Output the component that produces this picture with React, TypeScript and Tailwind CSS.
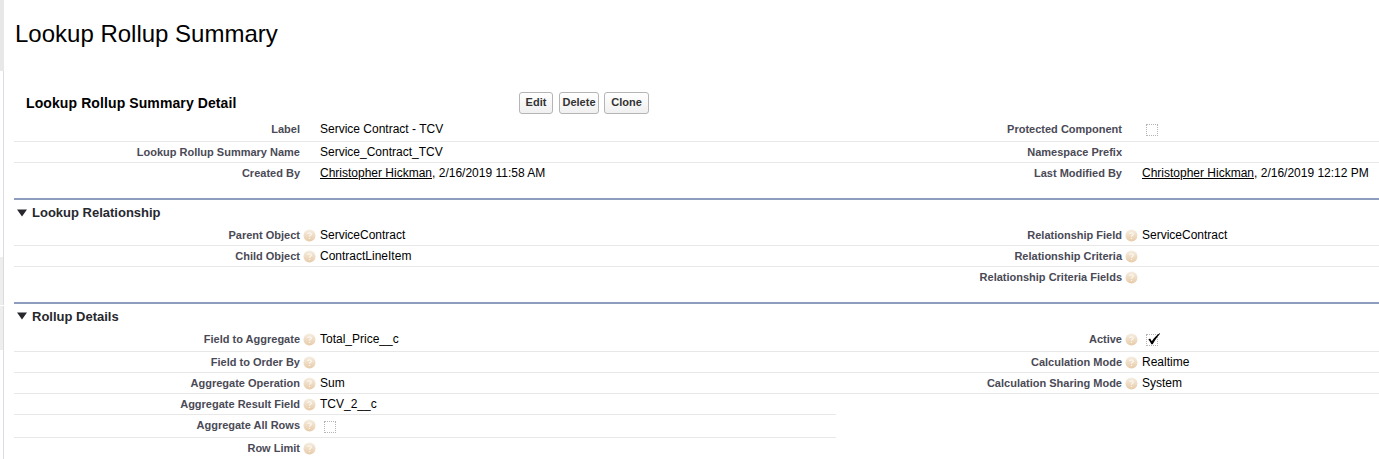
const font = "font-['Liberation_Sans',Arial,sans-serif]";

function Help() {
  return (
    <svg width="13" height="13" viewBox="0 0 13 13" className="shrink-0">
      <defs>
        <linearGradient id="hg" x1="0" y1="0" x2="0" y2="1">
          <stop offset="0%" stopColor="#f6eee2" />
          <stop offset="100%" stopColor="#e7cba8" />
        </linearGradient>
      </defs>
      <circle cx="6.5" cy="6.5" r="6" fill="url(#hg)" />
      <path d="M4.6 5 C4.8 3.4 8.3 3.4 8.3 5.2 C8.3 6.3 6.5 6.4 6.5 7.8 M6.5 9 V10" fill="none" stroke="#fbf7f0" strokeWidth="1.3" />
    </svg>
  );
}

function Check({ checked = false, mt = "mt-[3px]" }: { checked?: boolean; mt?: string }) {
  return (
    <div className={`relative ml-[4px] ${mt} w-[12px] h-[12px] border border-dotted border-[#b5b5b5]`}>
      {checked && (
        <svg width="14" height="14" viewBox="0 0 16 15" className="absolute left-[0px] top-[-3px]">
          <path d="M1.5 8 L3.5 7 L5.5 10 C8 6 11 3 14.5 0.8 L15 1.5 C11.5 5 9 9 6.5 13.5 L5 13.5 C4 11.5 3 9.5 1.5 8 Z" fill="#000" />
        </svg>
      )}
    </div>
  );
}

type Cell = { label?: string; value?: React.ReactNode; help?: boolean };

function Half({ cell, wide, h, line, pt }: { cell?: Cell; wide: boolean; h: string; line: boolean; pt: string }) {
  return (
    <div className={`${wide ? "w-[822px]" : "flex-1"} ${h} flex items-start ${pt} ${line ? "border-b border-[#e8e8e8]" : ""}`}>
      {cell && (
        <>
          <div className="w-[286px] text-right text-[11px] leading-[14px] font-bold text-[#4a4a56]">{cell.label}</div>
          <div className="w-[20px] pt-[1px] pl-[3px]">{cell.help && <Help />}</div>
          <div className="text-[12px] leading-[15px] text-black">{cell.value}</div>
        </>
      )}
    </div>
  );
}

function Row({ l, r, h = "h-[21px]", line = true, rLine, pt = "pt-[3px]" }: { l?: Cell; r?: Cell; h?: string; line?: boolean; rLine?: boolean; pt?: string }) {
  return (
    <div className="flex">
      <Half cell={l} wide h={h} line={line} pt={pt} />
      <Half cell={r} wide={false} h={h} line={rLine ?? line} pt={pt} />
    </div>
  );
}

function Section({ title }: { title: string }) {
  return (
    <div className="h-[28px] border-t-2 border-[#8e9dbe] flex items-center pl-[3px]">
      <svg width="11" height="8" viewBox="0 0 11 8" className="mr-[4px]">
        <path d="M0 0.5 H10 L5 7.5 Z" fill="#27282e" />
      </svg>
      <span className="text-[13px] font-bold text-[#27282e]">{title}</span>
    </div>
  );
}

function Person({ date }: { date: string }) {
  return (
    <>
      <span className="underline text-black">Christopher Hickman</span>, {date}
    </>
  );
}

function Btn({ children, w }: { children: string; w: string }) {
  return (
    <div className={`${w} h-[22px] flex items-center justify-center rounded-[3px] border border-[#b5b5b5] bg-gradient-to-b from-white to-[#f0f0f0] text-[11px] font-bold text-[#333]`}>
      {children}
    </div>
  );
}

export default function App() {
  return (
    <div className={`${font} flex w-[1379px] h-[459px] overflow-hidden bg-white`}>
      <div className="w-[14px] shrink-0 flex flex-col">
        <div className="w-[4px] h-[71px] shrink-0 bg-[#e8e8e8]" />
        <div className="w-[4px] h-[186px] shrink-0 border-r border-[#dcdce2]" />
        <div className="w-[4px] h-[48px] shrink-0 bg-[#eeeeee] border-r border-[#dcdcdc]" />
        <div className="w-[4px] h-[44px] shrink-0 mt-[1px] bg-[#eeeeee] border-r border-[#dcdcdc]" />
        <div className="w-[4px] h-[109px] shrink-0 border-r border-[#dcdce2]" />
      </div>
      <div className="flex-1 min-w-0 flex flex-col">
        <h1 className="pl-[1px] pt-[20px] h-[92px] text-[24px] leading-[28px] text-black">Lookup Rollup Summary</h1>
        <div className="h-[28px] pt-[1px] flex items-start">
          <div className="w-[505px] pl-[12px] pt-[3px] text-[14px] leading-[16px] font-bold text-black tracking-[0.1px]">Lookup Rollup Summary Detail</div>
          <div className="flex">
            <Btn w="w-[34px]">Edit</Btn>
            <div className="ml-[6px]"><Btn w="w-[40px]">Delete</Btn></div>
            <div className="ml-[5px]"><Btn w="w-[45px]">Clone</Btn></div>
          </div>
        </div>
        <Row pt="pt-[4px]" h="h-[24px]" l={{ label: "Label", value: "Service Contract - TCV" }} r={{ label: "Protected Component", value: <Check mt="mt-[2px]" /> }} />
        <Row l={{ label: "Lookup Rollup Summary Name", value: "Service_Contract_TCV" }} r={{ label: "Namespace Prefix" }} />
        <Row h="h-[35px]" line={false} l={{ label: "Created By", value: <Person date="2/16/2019 11:58 AM" /> }} r={{ label: "Last Modified By", value: <Person date="2/16/2019 12:12 PM" /> }} />
        <Section title="Lookup Relationship" />
        <Row pt="pt-[2px]" h="h-[20px]" l={{ label: "Parent Object", help: true, value: "ServiceContract" }} r={{ label: "Relationship Field", help: true, value: "ServiceContract" }} />
        <Row l={{ label: "Child Object", help: true, value: "ContractLineItem" }} r={{ label: "Relationship Criteria", help: true }} />
        <Row h="h-[35px]" line={false} r={{ label: "Relationship Criteria Fields", help: true }} />
        <Section title="Rollup Details" />
        <Row h="h-[23px]" l={{ label: "Field to Aggregate", help: true, value: "Total_Price__c" }} r={{ label: "Active", help: true, value: <Check checked mt="mt-[2px]" /> }} />
        <Row l={{ label: "Field to Order By", help: true }} r={{ label: "Calculation Mode", help: true, value: "Realtime" }} />
        <Row l={{ label: "Aggregate Operation", help: true, value: "Sum" }} r={{ label: "Calculation Sharing Mode", help: true, value: "System" }} />
        <Row rLine={false} l={{ label: "Aggregate Result Field", help: true, value: "TCV_2__c" }} />
        <Row h="h-[23px]" rLine={false} l={{ label: "Aggregate All Rows", help: true, value: <Check mt="mt-[3px]" /> }} />
        <Row line={false} l={{ label: "Row Limit", help: true }} />
      </div>
    </div>
  );
}
